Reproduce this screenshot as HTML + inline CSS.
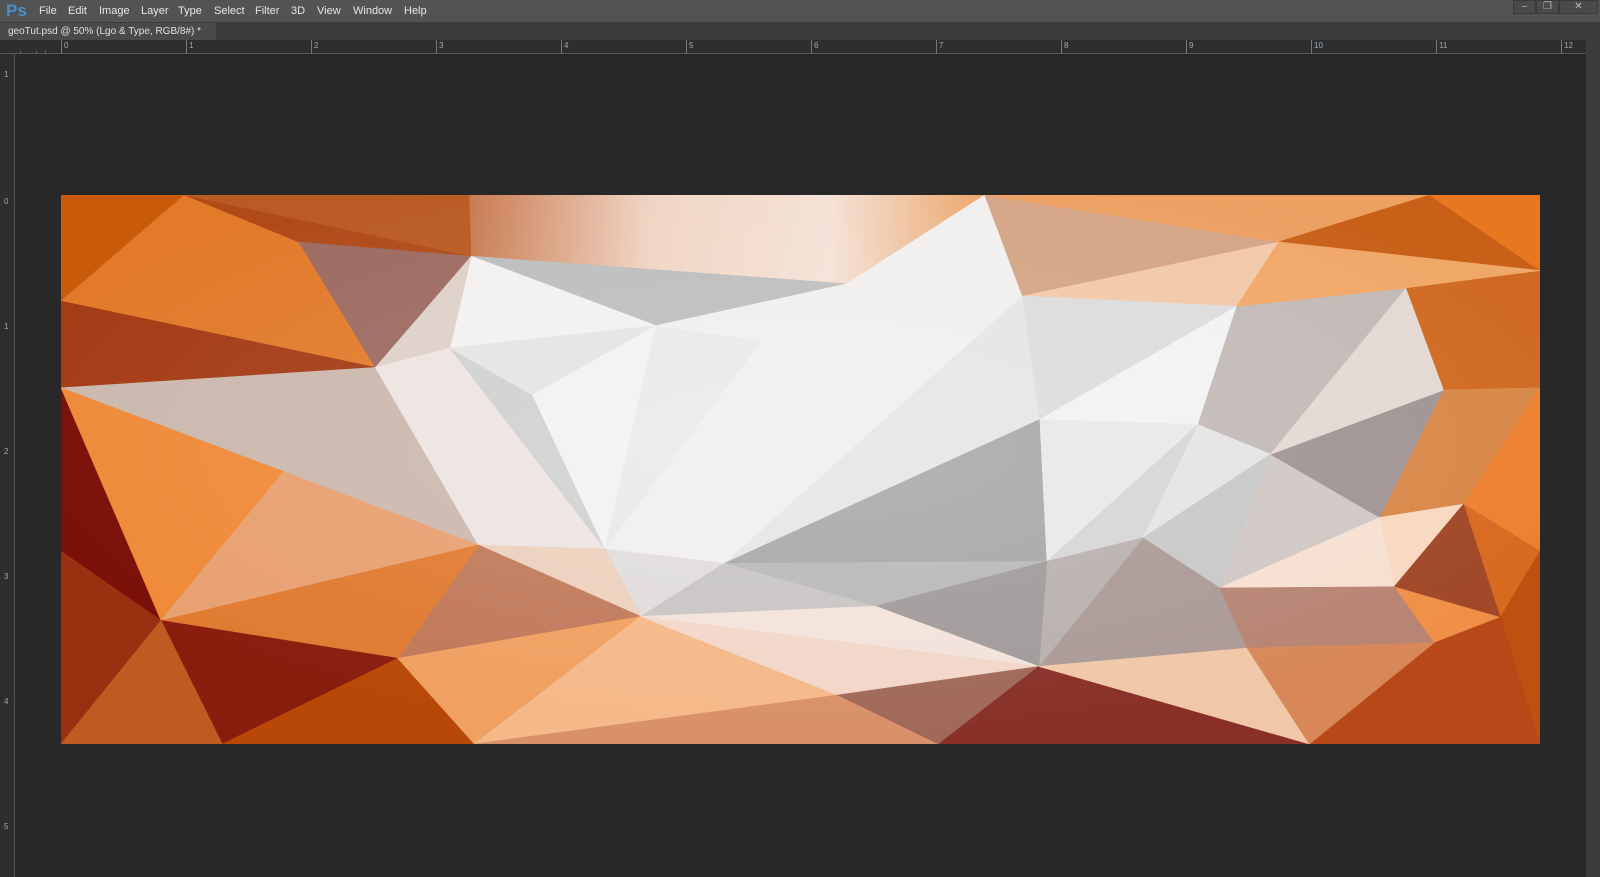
<!DOCTYPE html>
<html><head><meta charset="utf-8"><style>
*{margin:0;padding:0;box-sizing:border-box}
body{width:1600px;height:877px;background:#282828;overflow:hidden;position:relative;font-family:"Liberation Sans",sans-serif}
#menu{position:absolute;left:0;top:0;width:1600px;height:22px;background:#535353;color:#e6e6e6;font-size:11px}
#menu span{position:absolute;top:5px}
#ps{position:absolute;left:6px;top:1px;font-size:17px;font-weight:bold;color:#4a90c8}
#tabs{position:absolute;left:0;top:22px;width:1600px;height:18px;background:#3b3b3b}
#tab{position:absolute;left:0;top:1px;width:216px;height:17px;background:#4a4a4a;color:#e0e0e0;font-size:10px;padding:3px 0 0 8px}
#hr{position:absolute;left:0;top:40px;width:1586px;height:14px;background:#2e2e2e;border-bottom:1px solid #555}
#vr{position:absolute;left:0;top:54px;width:15px;height:823px;background:#2e2e2e;border-right:1px solid #555}
#sb{position:absolute;left:1586px;top:40px;width:14px;height:837px;background:#3c3c3c}
.n{position:absolute;font-size:8px;color:#9ab}
.wb{position:absolute;top:0;height:14px;background:#4a4a4a;border:1px solid #3a3a3a;color:#bbb;font-size:10px;text-align:center}
</style></head><body>
<div id="menu"><div id="ps">Ps</div>
<span style="left:39px">File</span><span style="left:68px">Edit</span><span style="left:99px">Image</span><span style="left:141px">Layer</span><span style="left:178px">Type</span><span style="left:214px">Select</span><span style="left:255px">Filter</span><span style="left:291px">3D</span><span style="left:317px">View</span><span style="left:353px">Window</span><span style="left:404px">Help</span>
<div class="wb" style="left:1513px;width:23px">–</div><div class="wb" style="left:1536px;width:23px">❐</div><div class="wb" style="left:1559px;width:39px">✕</div>
</div>
<div id="tabs"><div id="tab">geoTut.psd @ 50% (Lgo &amp; Type, RGB/8#) * <span style="margin-left:10px;color:#bbb">×</span></div></div>
<div id="hr">
<svg width="1586" height="14" style="position:absolute;left:0;top:0">
<g stroke="#777" stroke-width="1">
<path d="M61.5 0V14M186.5 0V14M311.5 0V14M436.5 0V14M561.5 0V14M686.5 0V14M811.5 0V14M936.5 0V14M1061.5 0V14M1186.5 0V14M1311.5 0V14M1436.5 0V14M1561.5 0V14"/>
</g>
<g stroke="#666">
<path d="M20.5 11V14M36.5 11V14M45.5 10V14"/>
</g>
</svg>
<span class="n" style="left:64px;top:1px">0</span><span class="n" style="left:189px;top:1px">1</span><span class="n" style="left:314px;top:1px">2</span><span class="n" style="left:439px;top:1px">3</span><span class="n" style="left:564px;top:1px">4</span><span class="n" style="left:689px;top:1px">5</span><span class="n" style="left:814px;top:1px">6</span><span class="n" style="left:939px;top:1px">7</span><span class="n" style="left:1064px;top:1px">8</span><span class="n" style="left:1189px;top:1px">9</span><span class="n" style="left:1314px;top:1px">10</span><span class="n" style="left:1439px;top:1px">11</span><span class="n" style="left:1564px;top:1px">12</span>
</div>
<div id="vr">
<span class="n" style="left:4px;top:16px">1</span><span class="n" style="left:4px;top:143px">0</span><span class="n" style="left:4px;top:268px">1</span><span class="n" style="left:4px;top:393px">2</span><span class="n" style="left:4px;top:518px">3</span><span class="n" style="left:4px;top:643px">4</span><span class="n" style="left:4px;top:768px">5</span>
</div>
<div id="sb"></div>
<svg style="position:absolute;left:61px;top:195px" width="1479" height="549" viewBox="60 191 1449 538" preserveAspectRatio="none">
<defs>
<linearGradient id="top" x1="0" y1="0" x2="1" y2="0"><stop offset="0" stop-color="#c87a50"/><stop offset="0.35" stop-color="#f0d4c2"/><stop offset="0.7" stop-color="#f4e2d6"/><stop offset="1" stop-color="#eca468"/></linearGradient>
<radialGradient id="g" cx="0.5" cy="0.45" r="0.55"><stop offset="0" stop-color="#fff" stop-opacity="0.15"/><stop offset="1" stop-color="#fff" stop-opacity="0"/></radialGradient>
</defs>
<rect x="60" y="191" width="1449" height="538" fill="#e89050"/>
<g stroke-width="0.6">
<polygon points="60,191 181,191 60,295" fill="#c85a0a" stroke="#c85a0a"/>
<polygon points="181,191 293,237 368,360 60,295" fill="#e27a2a" stroke="#e27a2a"/>
<polygon points="181,191 462,251 293,237" fill="#b04a18" stroke="#b04a18"/>
<polygon points="293,237 462,251 368,360" fill="#9c6a60" stroke="#9c6a60"/>
<polygon points="60,295 368,360 60,380" fill="#a43c16" stroke="#a43c16"/>
<polygon points="181,191 460,191 462,251" fill="#ba5a24" stroke="#ba5a24"/>
<polygon points="460,191 965,191 830,278 462,251" fill="url(#top)" stroke="none"/>
<polygon points="462,251 830,278 643,319" fill="#bdbdbd" stroke="#bdbdbd"/>
<polygon points="462,251 643,319 441,341" fill="#f3f1f0" stroke="#f3f1f0"/>
<polygon points="462,251 441,341 368,360" fill="#ddd0c8" stroke="#ddd0c8"/>
<polygon points="60,380 368,360 469,534 278,462" fill="#cbb8ae" stroke="#cbb8ae"/>
<polygon points="60,380 158,608 60,540" fill="#7a1008" stroke="#7a1008"/>
<polygon points="60,380 278,462 158,608" fill="#ef8a38" stroke="#ef8a38"/>
<polygon points="278,462 469,534 158,608" fill="#e8a070" stroke="#e8a070"/>
<polygon points="368,360 441,341 593,538 469,534" fill="#ece4e0" stroke="#ece4e0"/>
<polygon points="441,341 522,387 593,538" fill="#d0d0d0" stroke="#d0d0d0"/>
<polygon points="441,341 643,319 522,387" fill="#e4e4e4" stroke="#e4e4e4"/>
<polygon points="522,387 643,319 593,538" fill="#f2f2f2" stroke="#f2f2f2"/>
<polygon points="643,319 747,334 593,538" fill="#e8e9ea" stroke="#e8e9ea"/>
<polygon points="643,319 830,278 965,191 1002,290 710,552 593,538 747,334" fill="#f1efee" stroke="#f1efee"/>
<polygon points="1002,290 1019,411 710,552" fill="#e5e5e6" stroke="#e5e5e6"/>
<polygon points="1019,411 1026,550 710,552" fill="#a6a7a9" stroke="#a6a7a9"/>
<polygon points="965,191 1253,237 1002,290" fill="#d4a484" stroke="#d4a484"/>
<polygon points="965,191 1401,191 1253,237" fill="#eca062" stroke="#eca062"/>
<polygon points="1002,290 1253,237 1212,300" fill="#f2c8a8" stroke="#f2c8a8"/>
<polygon points="1002,290 1212,300 1019,411" fill="#dcdcdc" stroke="#dcdcdc"/>
<polygon points="1212,300 1174,416 1019,411" fill="#f2f2f2" stroke="#f2f2f2"/>
<polygon points="1019,411 1174,416 1026,550" fill="#e8e8e8" stroke="#e8e8e8"/>
<polygon points="1174,416 1120,527 1026,550" fill="#d6d6d6" stroke="#d6d6d6"/>
<polygon points="1212,300 1378,282 1245,445 1174,416" fill="#c2bab6" stroke="#c2bab6"/>
<polygon points="1174,416 1245,445 1120,527" fill="#e4e4e4" stroke="#e4e4e4"/>
<polygon points="1245,445 1195,576 1120,527" fill="#c8c8c8" stroke="#c8c8c8"/>
<polygon points="1245,445 1352,507 1195,576" fill="#d0c8c4" stroke="#d0c8c4"/>
<polygon points="1245,445 1415,382 1352,507" fill="#a09494" stroke="#a09494"/>
<polygon points="1378,282 1415,382 1245,445" fill="#e4d8d2" stroke="#e4d8d2"/>
<polygon points="1378,282 1509,265 1509,380 1415,382" fill="#d06a22" stroke="#d06a22"/>
<polygon points="1253,237 1401,191 1509,265" fill="#c86018" stroke="#c86018"/>
<polygon points="1401,191 1509,191 1509,265" fill="#e87820" stroke="#e87820"/>
<polygon points="1253,237 1509,265 1378,282 1212,300" fill="#f0a868" stroke="#f0a868"/>
<polygon points="1415,382 1509,380 1434,494 1352,507" fill="#d88848" stroke="#d88848"/>
<polygon points="1509,380 1509,540 1434,494" fill="#ee8030" stroke="#ee8030"/>
<polygon points="1434,494 1509,540 1470,605" fill="#d86a20" stroke="#d86a20"/>
<polygon points="1352,507 1434,494 1366,575" fill="#f8d8c0" stroke="#f8d8c0"/>
<polygon points="1434,494 1470,605 1366,575" fill="#a04828" stroke="#a04828"/>
<polygon points="1195,576 1352,507 1366,575" fill="#f6e0d0" stroke="#f6e0d0"/>
<polygon points="1366,575 1470,605 1405,630" fill="#f09048" stroke="#f09048"/>
<polygon points="1509,540 1509,729 1470,605" fill="#c05010" stroke="#c05010"/>
<polygon points="1470,605 1509,729 1283,729 1405,630" fill="#b84818" stroke="#b84818"/>
<polygon points="1120,527 1195,576 1222,635 1018,653" fill="#ab9a96" stroke="#ab9a96"/>
<polygon points="1195,576 1366,575 1405,630 1222,635" fill="#b88474" stroke="#b88474"/>
<polygon points="1026,550 1120,527 1018,653" fill="#b8b0ae" stroke="#b8b0ae"/>
<polygon points="710,552 1026,550 858,594" fill="#b8b8b8" stroke="#b8b8b8"/>
<polygon points="858,594 1026,550 1018,653" fill="#a09a9a" stroke="#a09a9a"/>
<polygon points="593,538 710,552 628,604" fill="#e0dcdc" stroke="#e0dcdc"/>
<polygon points="710,552 858,594 628,604" fill="#c8c4c4" stroke="#c8c4c4"/>
<polygon points="628,604 858,594 1018,653" fill="#f2e2da" stroke="#f2e2da"/>
<polygon points="469,534 593,538 628,604" fill="#ecd0bc" stroke="#ecd0bc"/>
<polygon points="469,534 628,604 390,645" fill="#c07858" stroke="#c07858"/>
<polygon points="158,608 469,534 390,645" fill="#e07a30" stroke="#e07a30"/>
<polygon points="158,608 390,645 218,729" fill="#8a1c0c" stroke="#8a1c0c"/>
<polygon points="60,540 158,608 60,729" fill="#9a3010" stroke="#9a3010"/>
<polygon points="158,608 218,729 60,729" fill="#c05a20" stroke="#c05a20"/>
<polygon points="390,645 218,729 465,729" fill="#b84808" stroke="#b84808"/>
<polygon points="390,645 628,604 465,729" fill="#f0a060" stroke="#f0a060"/>
<polygon points="628,604 821,681 465,729" fill="#f5b888" stroke="#f5b888"/>
<polygon points="628,604 1018,653 821,681" fill="#f2d6c8" stroke="#f2d6c8"/>
<polygon points="465,729 821,681 920,729" fill="#d89068" stroke="#d89068"/>
<polygon points="821,681 1018,653 920,729" fill="#a06858" stroke="#a06858"/>
<polygon points="1018,653 1283,729 920,729" fill="#883028" stroke="#883028"/>
<polygon points="1018,653 1222,635 1283,729" fill="#f0c8a8" stroke="#f0c8a8"/>
<polygon points="1222,635 1405,630 1283,729" fill="#d88858" stroke="#d88858"/>
</g>
<rect x="60" y="191" width="1449" height="538" fill="url(#g)"/>
</svg>
</body></html>
